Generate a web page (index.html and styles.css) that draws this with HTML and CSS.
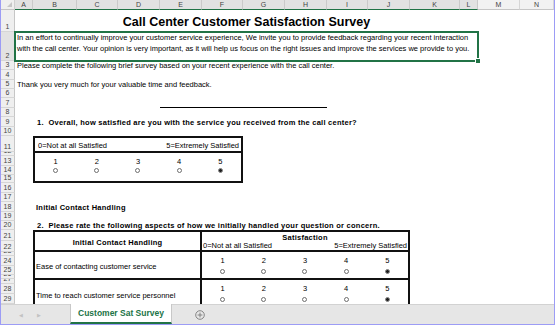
FILE: index.html
```html
<!DOCTYPE html>
<html lang="en">
<head>
    <meta charset="UTF-8">
    <title>Customer Sat Survey</title>
    <link rel="stylesheet" href="styles.css">
</head>
<body>
    <div class="window">
        <div class="sheet">
            <div class="corner"></div>
            <div class="col-hd sel">A</div>
            <div class="col-hd sel">B</div>
            <div class="col-hd sel">C</div>
            <div class="col-hd sel">D</div>
            <div class="col-hd sel">E</div>
            <div class="col-hd sel">F</div>
            <div class="col-hd sel">G</div>
            <div class="col-hd sel">H</div>
            <div class="col-hd sel">I</div>
            <div class="col-hd sel">J</div>
            <div class="col-hd sel">K</div>
            <div class="col-hd sel">L</div>
            <div class="col-hd">M</div>
            <div class="col-hd">N</div>

            <div class="row-hd">1</div>
            <div class="row-hd sel">2</div>
            <div class="row-hd">3</div>
            <div class="row-hd">4</div>
            <div class="row-hd">5</div>
            <div class="row-hd">6</div>
            <div class="row-hd">7</div>
            <div class="row-hd">8</div>
            <div class="row-hd">9</div>
            <div class="row-hd">10</div>
            <div class="row-hd">11</div>
            <div class="row-hd">12</div>
            <div class="row-hd">13</div>
            <div class="row-hd">14</div>
            <div class="row-hd">15</div>
            <div class="row-hd">16</div>
            <div class="row-hd">17</div>
            <div class="row-hd">18</div>
            <div class="row-hd">19</div>
            <div class="row-hd">20</div>
            <div class="row-hd">21</div>
            <div class="row-hd">22</div>
            <div class="row-hd">23</div>
            <div class="row-hd">24</div>
            <div class="row-hd">25</div>
            <div class="row-hd">26</div>
            <div class="row-hd">27</div>
            <div class="row-hd">28</div>
            <div class="row-hd">29</div>

            <div class="title">Call Center Customer Satisfaction Survey</div>
            <div class="intro">In an effort to continually improve your customer service experience, We invite you to provide feedback regarding your recent interaction with the call center. Your opinion is very important, as it will help us focus on the right issues and improve the services we provide to you.</div>
            <div class="note note-r3">Please complete the following brief survey based on your recent experience with the call center.</div>
            <div class="note note-r5">Thank you very much for your valuable time and feedback.</div>
            <div class="rule"></div>

            <div class="question q1">1.&nbsp; Overall, how satisfied are you with the service you received from the call center?</div>

            <div class="t1">
                <div class="t1-head">
                    <span>0=Not at all Satisfied</span>
                    <span>5=Extremely Satisfied</span>
                </div>
                <div class="scale t1-scale">
                    <div class="opt"><span>1</span><i class="radio"></i></div>
                    <div class="opt"><span>2</span><i class="radio"></i></div>
                    <div class="opt"><span>3</span><i class="radio"></i></div>
                    <div class="opt"><span>4</span><i class="radio"></i></div>
                    <div class="opt"><span>5</span><i class="radio on"></i></div>
                </div>
            </div>

            <div class="section">Initial Contact Handling</div>
            <div class="question q2">2.&nbsp; Please rate the following aspects of how we initially handled your question or concern.</div>

            <div class="t2">
                <div class="t2-hd-left">Initial Contact Handling</div>
                <div class="t2-hd-right">
                    <div class="sat">Satisfaction</div>
                    <div class="t2-range">
                        <span>0=Not at all Satisfied</span>
                        <span>5=Extremely Satisfied</span>
                    </div>
                </div>

                <div class="t2-label">Ease of contacting customer service</div>
                <div class="scale t2-scale">
                    <div class="opt"><span>1</span><i class="radio"></i></div>
                    <div class="opt"><span>2</span><i class="radio"></i></div>
                    <div class="opt"><span>3</span><i class="radio"></i></div>
                    <div class="opt"><span>4</span><i class="radio"></i></div>
                    <div class="opt"><span>5</span><i class="radio on"></i></div>
                </div>

                <div class="t2-label last">Time to reach customer service personnel</div>
                <div class="scale t2-scale last">
                    <div class="opt"><span>1</span><i class="radio"></i></div>
                    <div class="opt"><span>2</span><i class="radio"></i></div>
                    <div class="opt"><span>3</span><i class="radio"></i></div>
                    <div class="opt"><span>4</span><i class="radio"></i></div>
                    <div class="opt"><span>5</span><i class="radio on"></i></div>
                </div>
            </div>
        </div>

        <div class="tabbar">
            <div class="nav">
                <span class="arrow">&#9664;</span>
                <span class="arrow">&#9654;</span>
            </div>
            <div class="tab">Customer Sat Survey</div>
            <div class="add">
                <svg width="10" height="10" viewBox="0 0 10 10">
                    <circle cx="5" cy="5" r="4.3" fill="none" stroke="#7a7a7a" stroke-width="0.9"/>
                    <path d="M5 2.6v4.8M2.6 5h4.8" stroke="#7a7a7a" stroke-width="0.9"/>
                </svg>
            </div>
        </div>
    </div>
</body>
</html>
```

FILE: styles.css
```css
body {
    margin: 0;
    font-family: "Liberation Sans", Arial, sans-serif;
    background-color: #fff;
}

.window {
    width: 555px;
    height: 325px;
    box-sizing: border-box;
    border: 1px solid #9c9cf5;
    border-top: none;
    display: flex;
    flex-direction: column;
    overflow: hidden;
}

.sheet {
    height: 304px;
    flex: none;
    display: grid;
    grid-template-columns: 14px 18px 44px 41px 42px 42px 41px 42px 42px 41px 42px 50px 18px 42px 1fr;
    grid-template-rows: 10px 22px 29px 9px 10px 9px 9px 10px 9px 10px 9px 16px 4px 10px 9px 8px 10px 9px 10px 9px 9px 11px 11px 4px 10px 9px 4px 5px 10px 10px;
    overflow: hidden;
    font-size: 7.5px;
    color: #000;
}

/* headers */

.corner {
    grid-row: 1;
    background-color: #efefef;
    border-right: 1px solid #cfcfcf;
    border-bottom: 1px solid #c4c4c4;
    position: relative;
}

.corner::after {
    content: "";
    position: absolute;
    right: 2px;
    bottom: 2px;
    border-left: 5px solid transparent;
    border-bottom: 5px solid #c6c6c6;
}

.col-hd {
    grid-row: 1;
    background-color: #f2f2f2;
    border-right: 1px solid #d6d6d6;
    border-bottom: 1px solid #c6c6c6;
    display: flex;
    align-items: center;
    justify-content: center;
    color: #444;
    font-size: 7px;
    line-height: 9px;
    overflow: hidden;
}

.col-hd.sel {
    background-color: #e2e2e2;
    border-bottom: 1px solid #217346;
    border-right-color: #cacaca;
}

.row-hd {
    grid-column: 1;
    background-color: #efefef;
    border-right: 1px solid #c6c6c6;
    border-bottom: 1px solid #d6d6d6;
    display: flex;
    align-items: flex-end;
    justify-content: center;
    color: #444;
    font-size: 7px;
    line-height: 9px;
    overflow: hidden;
}

.row-hd.sel {
    background-color: #e2e2e2;
    border-right: 1px solid #217346;
}

/* cells */

.title {
    grid-column: 2 / 14;
    grid-row: 2;
    display: flex;
    align-items: center;
    justify-content: center;
    font-size: 12.5px;
    font-weight: bold;
    padding-top: 1px;
}

.intro {
    grid-column: 2 / 14;
    grid-row: 3;
    outline: 2px solid #217346;
    outline-offset: -1px;
    padding: 0 2px;
    line-height: 11px;
    position: relative;
}

.intro::after {
    content: "";
    position: absolute;
    right: -3px;
    bottom: -3px;
    width: 4px;
    height: 4px;
    background-color: #217346;
    border: 1px solid #fff;
}

.note {
    grid-column: 2 / 16;
    display: flex;
    align-items: center;
    padding-left: 2px;
    white-space: nowrap;
}

.note-r3 {
    grid-row: 4;
}

.note-r5 {
    grid-row: 6;
}

.rule {
    grid-column: 6 / 10;
    grid-row: 8;
    border-bottom: 1px solid #000;
}

.question {
    grid-column: 3 / 16;
    display: flex;
    align-items: flex-end;
    padding-left: 4px;
    font-weight: bold;
    letter-spacing: 0.25px;
    white-space: nowrap;
}

.q1 {
    grid-row: 10;
    align-items: center;
}

.q2 {
    grid-row: 21;
    line-height: 8px;
}

.section {
    grid-column: 3 / 10;
    grid-row: 19;
    display: flex;
    align-items: center;
    padding-left: 3px;
    font-weight: bold;
    letter-spacing: 0.25px;
}

/* survey tables */

.scale {
    display: grid;
    grid-template-columns: repeat(5, 1fr);
}

.opt {
    display: flex;
    flex-direction: column;
    align-items: center;
    line-height: 10px;
}

.radio {
    display: block;
    width: 5px;
    height: 5px;
    box-sizing: border-box;
    border: 1px solid #6e6e6e;
    border-radius: 50%;
    background-color: #fff;
}

.radio.on {
    background-color: #1e1e1e;
    border-color: #8a8a8a;
}

.t1 {
    grid-column: 3 / 8;
    grid-row: 12 / 17;
    border: 2px solid #111;
    display: flex;
    flex-direction: column;
}

.t1-head {
    height: 15px;
    box-sizing: border-box;
    border-bottom: 2px solid #111;
    display: flex;
    justify-content: space-between;
    align-items: center;
    padding: 2px 2px 0 3px;
}

.t1-scale {
    padding-top: 4px;
}

.t1-scale .radio {
    margin-top: 1px;
}

.t2 {
    grid-column: 3 / 12;
    grid-row: 22 / 31;
    border: 2px solid #111;
    border-bottom: none;
    display: grid;
    grid-template-columns: 167px 1fr;
    grid-template-rows: 20px 28px 28px;
}

.t2-hd-left {
    border-right: 2px solid #111;
    border-bottom: 2px solid #111;
    display: flex;
    align-items: center;
    justify-content: center;
    font-weight: bold;
    letter-spacing: 0.25px;
    padding-top: 2px;
}

.t2-hd-right {
    border-bottom: 2px solid #111;
    display: flex;
    flex-direction: column;
}

.sat {
    text-align: center;
    font-weight: bold;
    letter-spacing: 0.25px;
    line-height: 9px;
    padding-top: 1px;
}

.t2-range {
    display: flex;
    justify-content: space-between;
    padding: 0 1px;
    line-height: 8px;
}

.t2-label {
    border-right: 2px solid #111;
    border-bottom: 2px solid #111;
    display: flex;
    align-items: center;
    padding: 2px 0 0 1px;
}

.t2-scale {
    border-bottom: 2px solid #111;
    padding-top: 4px;
}

.t2-label.last,
.t2-scale.last {
    border-bottom: none;
}

.t2-scale .radio {
    margin-top: 3px;
}

/* sheet tabs */

.tabbar {
    flex: 1;
    background-color: #e6e6e6;
    border-top: 1px solid #d2d2d2;
    display: flex;
    align-items: stretch;
}

.nav {
    width: 69px;
    display: flex;
    align-items: center;
    padding-left: 18px;
    box-sizing: border-box;
    gap: 14px;
}

.arrow {
    color: #c2c2c2;
    font-size: 5px;
}

.tab {
    width: 102px;
    box-sizing: border-box;
    background-color: #fff;
    border-left: 1px solid #c8c8c8;
    border-right: 1px solid #c8c8c8;
    border-bottom: 2px solid #217346;
    display: flex;
    align-items: center;
    justify-content: center;
    color: #217346;
    font-weight: bold;
    font-size: 8.5px;
    margin-top: -1px;
}

.add {
    margin-left: 23px;
    display: flex;
    align-items: center;
}

.add svg {
    display: block;
}
```
